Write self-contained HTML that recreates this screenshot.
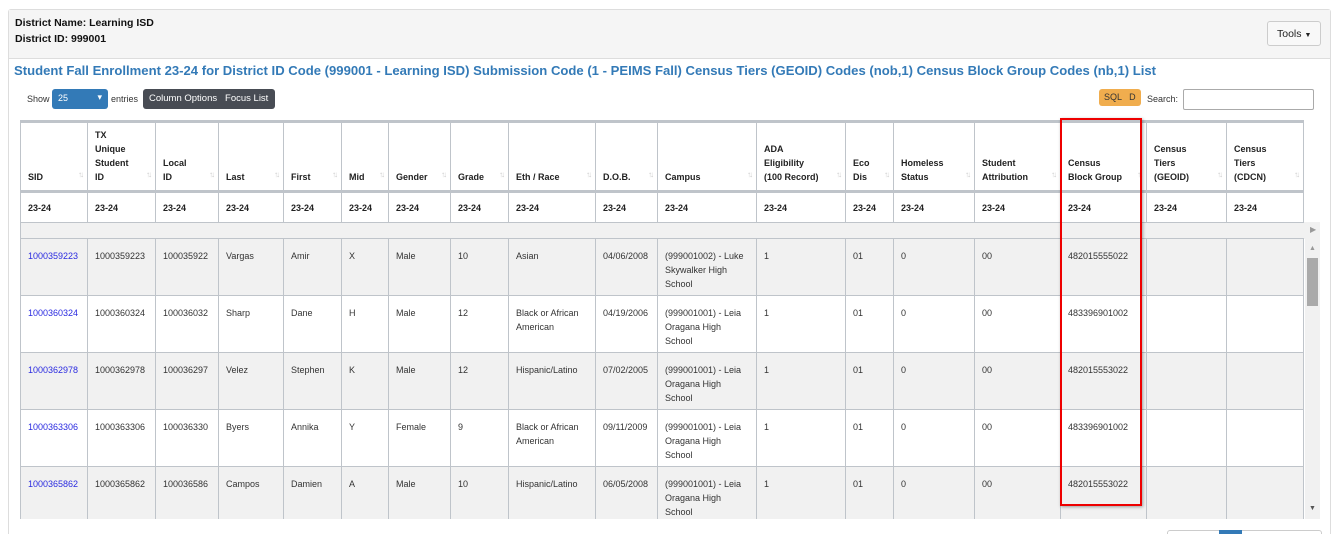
<!DOCTYPE html>
<html style="overflow:hidden;height:534px"><head><style>
*{box-sizing:border-box;margin:0;padding:0}
body{width:1335px;height:534px;overflow:hidden;background:#fff;font-family:"Liberation Sans",sans-serif;font-size:9px;color:#333;position:relative}
.panel{position:absolute;left:8px;top:9px;width:1323px;height:520px;border:1px solid #ddd;border-radius:3px}
.ph{position:absolute;left:0;top:0;width:100%;height:49px;background:#f5f5f5;border-bottom:1px solid #ddd}
.ph b{position:absolute;left:6px;font-size:10.5px;color:#111}
.tools{position:absolute;right:9px;top:11px;width:54px;height:25px;border:1px solid #ccc;border-radius:3px;background:#f8f8f8;font-size:10.5px;color:#222;padding:6px 0 0 9px}
.title{position:absolute;left:14px;top:63px;font-size:13.1px;font-weight:bold;color:#337ab7;white-space:nowrap}
.abs{position:absolute}
table{position:absolute;left:20px;top:120px;border-collapse:collapse;table-layout:fixed}
td,th{border:1px solid #bfc4ca;vertical-align:top;text-align:left;padding:0 7px}
th{height:70px;vertical-align:bottom;padding-bottom:6px;font-weight:bold;color:#222;line-height:14px;position:relative;border-top:3px solid #bfc4ca;border-bottom:3px solid #bfc4ca}
th:after{content:"↑↓";position:absolute;right:5px;bottom:8px;color:#ccc;font-size:8px;letter-spacing:-2px}
tr.yr td{height:31px;vertical-align:middle;font-weight:bold;color:#222}
tr.d td{height:57px;padding-top:10px;line-height:14px}
tr.g td{background:#f1f1f1}
a{color:#2a2ae0;text-decoration:none}
</style></head><body>
<div class="panel">
 <div class="ph"><b style="top:7px">District Name: Learning ISD</b><b style="top:23px">District ID: 999001</b>
 <div class="tools">Tools <span style="font-size:7px">▼</span></div></div>
</div>
<div class="title">Student Fall Enrollment 23-24 for District ID Code (999001 - Learning ISD) Submission Code (1 - PEIMS Fall) Census Tiers (GEOID) Codes (nob,1) Census Block Group Codes (nb,1) List</div>
<div class="abs" style="left:27px;top:94px">Show</div>
<div class="abs" style="left:52px;top:89px;width:56px;height:20px;background:#337ab7;border-radius:3px;color:#fff;padding:4px 0 0 6px">25<span style="position:absolute;right:6px;top:3px">▾</span></div>
<div class="abs" style="left:111px;top:94px">entries</div>
<div class="abs" style="left:143px;top:89px;width:132px;height:20px;background:#484c54;border-radius:3px;color:#fff;font-size:9.5px;padding:4px 0 0 6px">Column Options &nbsp;&nbsp;Focus List</div>
<div class="abs" style="left:1099px;top:89px;width:42px;height:17px;background:#f0ad4e;border-radius:3px;color:#333;padding:3px 0 0 5px">SQL &nbsp; D</div>
<div class="abs" style="left:1147px;top:94px">Search:</div>
<div class="abs" style="left:1183px;top:89px;width:131px;height:21px;border:1px solid #aaa;border-radius:2px"></div>
<div class="abs" style="left:20px;top:222px;width:1300px;height:17px;background:#f1f1f1"></div>
<div class="abs" style="left:25px;top:225px;color:#aaa;font-size:8px">◀</div>
<div class="abs" style="left:1310px;top:225px;color:#999;font-size:8px">▶</div>
<div class="abs" style="left:1305px;top:239px;width:15px;height:280px;background:#f1f1f1"></div>
<div class="abs" style="left:1307px;top:258px;width:11px;height:48px;background:#aaa"></div>
<div class="abs" style="left:1309px;top:245px;color:#999;font-size:7px">▲</div>
<div class="abs" style="left:1309px;top:505px;color:#555;font-size:7px">▼</div>
<table>
<colgroup><col style="width:67px"><col style="width:68px"><col style="width:63px"><col style="width:65px"><col style="width:58px"><col style="width:47px"><col style="width:62px"><col style="width:58px"><col style="width:87px"><col style="width:62px"><col style="width:99px"><col style="width:89px"><col style="width:48px"><col style="width:81px"><col style="width:86px"><col style="width:86px"><col style="width:80px"><col style="width:77px"></colgroup>
<tr><th>SID</th><th>TX<br>Unique<br>Student<br>ID</th><th>Local<br>ID</th><th>Last</th><th>First</th><th>Mid</th><th>Gender</th><th>Grade</th><th>Eth / Race</th><th>D.O.B.</th><th>Campus</th><th>ADA<br>Eligibility<br>(100 Record)</th><th>Eco<br>Dis</th><th>Homeless<br>Status</th><th>Student<br>Attribution</th><th>Census<br>Block Group</th><th>Census<br>Tiers<br>(GEOID)</th><th>Census<br>Tiers<br>(CDCN)</th></tr>
<tr class="yr"><td>23-24</td><td>23-24</td><td>23-24</td><td>23-24</td><td>23-24</td><td>23-24</td><td>23-24</td><td>23-24</td><td>23-24</td><td>23-24</td><td>23-24</td><td>23-24</td><td>23-24</td><td>23-24</td><td>23-24</td><td>23-24</td><td>23-24</td><td>23-24</td></tr>
<tr><td colspan="18" style="height:16px;border:none;border-left:1px solid #bfc4ca;background:#f1f1f1"></td></tr>
<tr class="d g"><td><a>1000359223</a></td><td>1000359223</td><td>100035922</td><td>Vargas</td><td>Amir</td><td>X</td><td>Male</td><td>10</td><td>Asian</td><td>04/06/2008</td><td>(999001002) - Luke Skywalker High School</td><td>1</td><td>01</td><td>0</td><td>00</td><td>482015555022</td><td></td><td></td></tr>
<tr class="d"><td><a>1000360324</a></td><td>1000360324</td><td>100036032</td><td>Sharp</td><td>Dane</td><td>H</td><td>Male</td><td>12</td><td>Black or African American</td><td>04/19/2006</td><td>(999001001) - Leia Oragana High School</td><td>1</td><td>01</td><td>0</td><td>00</td><td>483396901002</td><td></td><td></td></tr>
<tr class="d g"><td><a>1000362978</a></td><td>1000362978</td><td>100036297</td><td>Velez</td><td>Stephen</td><td>K</td><td>Male</td><td>12</td><td>Hispanic/Latino</td><td>07/02/2005</td><td>(999001001) - Leia Oragana High School</td><td>1</td><td>01</td><td>0</td><td>00</td><td>482015553022</td><td></td><td></td></tr>
<tr class="d"><td><a>1000363306</a></td><td>1000363306</td><td>100036330</td><td>Byers</td><td>Annika</td><td>Y</td><td>Female</td><td>9</td><td>Black or African American</td><td>09/11/2009</td><td>(999001001) - Leia Oragana High School</td><td>1</td><td>01</td><td>0</td><td>00</td><td>483396901002</td><td></td><td></td></tr>
<tr class="d g"><td><a>1000365862</a></td><td>1000365862</td><td>100036586</td><td>Campos</td><td>Damien</td><td>A</td><td>Male</td><td>10</td><td>Hispanic/Latino</td><td>06/05/2008</td><td>(999001001) - Leia Oragana High School</td><td>1</td><td>01</td><td>0</td><td>00</td><td>482015553022</td><td></td><td></td></tr>
</table>
<div class="abs" style="left:0;top:519px;width:1335px;height:15px;background:#fff"></div>
<div class="abs" style="left:8px;top:519px;width:1px;height:15px;background:#ddd"></div>
<div class="abs" style="left:1330px;top:519px;width:1px;height:15px;background:#ddd"></div>
<div class="abs" style="left:1167px;top:530px;width:155px;height:10px;border:1px solid #ccc;border-radius:3px"></div>
<div class="abs" style="left:1219px;top:530px;width:23px;height:6px;background:#337ab7"></div>
<div class="abs" style="left:1060px;top:118px;width:82px;height:388px;border:2px solid #e00;box-shadow:1px 1px 3px rgba(0,0,0,.35)"></div>
</body></html>
